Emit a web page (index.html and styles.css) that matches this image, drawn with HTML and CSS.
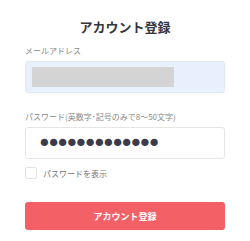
FILE: index.html
```html
<!DOCTYPE html>
<html lang="ja">
<head>
  <meta charset="UTF-8" />
  <meta name="viewport" content="width=device-width, initial-scale=1.0" />
  <title>アカウント登録</title>
  <link rel="stylesheet" href="styles.css">
</head>
<body>
  <form class="signup">
    <h1>アカウント登録</h1>

    <label class="field-label" for="email">メールアドレス</label>
    <div class="email-field" id="email">
      <span class="masked"></span>
    </div>

    <label class="field-label pw-label" for="password">パスワード(英数字･記号のみで8～50文字)</label>
    <input class="pw-field" type="password" id="password" value="aaaaaaaaaaaaa" />

    <label class="show-pw">
      <input type="checkbox" />
      <span>パスワードを表示</span>
    </label>

    <button type="button" class="submit">アカウント登録</button>
  </form>
</body>
</html>
```

FILE: styles.css
```css
html, body {
  margin: 0;
  padding: 0;
}
body {
  font-family: "Noto Sans CJK JP", "Noto Sans", sans-serif;
  background: #fff;
  color: #333;
}

.signup {
  display: flex;
  flex-direction: column;
  padding: 0 25px;
}

h1 {
  margin: 18px 0 0;
  font-size: 13px;
  line-height: 18px;
  font-weight: bold;
  text-align: center;
  color: #35353d;
}

.field-label {
  margin-top: 9px;
  font-size: 8px;
  line-height: 12px;
  color: #8a8a8a;
}

.pw-label { margin-top: 18px; }

.email-field, .pw-field {
  box-sizing: border-box;
  height: 32px;
  margin-top: 4px;
  border: 1px solid #e6e6e6;
  border-radius: 3px;
}

.email-field {
  display: flex;
  align-items: center;
  padding-left: 6px;
  background: #e8effd;
  border-color: #e0e7f5;
}

.masked {
  width: 142px;
  height: 20px;
  background: #d4d4d4;
}

.pw-field {
  width: 100%;
  padding: 0 0 0 11px;
  background: #fff;
  font-family: "DejaVu Sans", sans-serif;
  font-size: 25px;
  letter-spacing: -5.6px;
  color: #3b3b4a;
  outline: none;
}

.show-pw {
  display: flex;
  align-items: center;
  gap: 6px;
  margin-top: 8px;
  height: 12px;
  font-size: 8px;
  color: #777;
}

.show-pw input {
  appearance: none;
  margin: 0;
  width: 12px;
  height: 12px;
  border: 1px solid #e3e3e3;
  border-radius: 2px;
  background: #fff;
}

.submit {
  margin-top: 23px;
  height: 28px;
  border: none;
  border-radius: 3px;
  background: #f36166;
  color: #fff;
  font-family: inherit;
  font-size: 9px;
  font-weight: bold;
}
```
